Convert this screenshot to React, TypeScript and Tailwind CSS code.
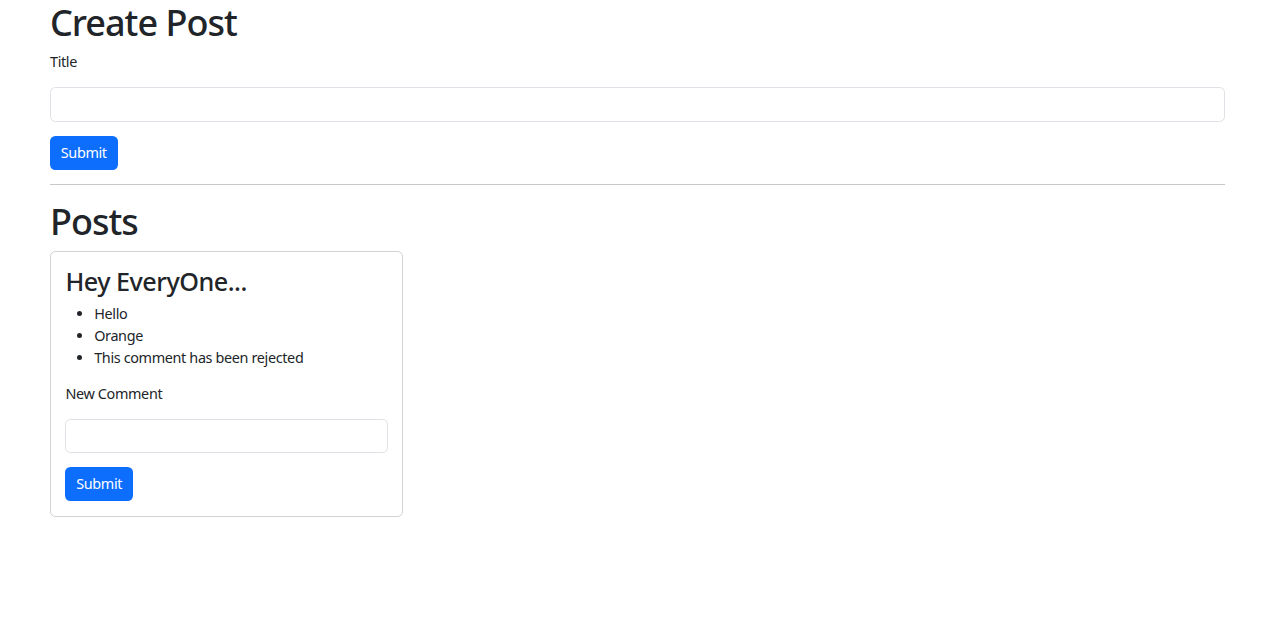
export default function App() {
  const comments = ['Hello', 'Orange', 'This comment has been rejected'];

  return (
    <div className="min-h-screen bg-white text-[#212529] font-['Segoe_UI','Noto_Sans',sans-serif] text-[14.4px] leading-[1.5] tracking-[-0.35px]">
      <div className="ml-[50px] w-[1175px] pt-[1px]">
        {/* Create post form */}
        <h1 className="text-[36px] font-medium leading-[1.2] mb-[7.2px] tracking-[-1px]">Create Post</h1>
        <form onSubmit={(e) => e.preventDefault()}>
          <div className="mb-[14.4px]">
            <label className="block mb-[14.4px]">Title</label>
            <input
              type="text"
              className="block w-full h-[34.2px] px-[10.8px] border border-[#dee2e6] rounded-[5.4px] outline-none"
            />
          </div>
          <button
            type="submit"
            className="h-[34.2px] px-[10.8px] bg-[#0d6efd] text-white rounded-[5.4px]"
          >
            Submit
          </button>
        </form>

        <hr className="mt-[14px] mb-[15px] border-t border-[#212529]/25" />

        {/* Posts */}
        <h1 className="text-[36px] font-medium leading-[1.2] mb-[7.2px] tracking-[-1px]">Posts</h1>
        <div className="flex flex-wrap">
          <div className="w-[353px] border border-black/[0.175] rounded-[5.4px] p-[14.4px]">
            <h3 className="text-[25.2px] font-medium leading-[1.2] mb-[7.2px] tracking-[-0.5px]">Hey EveryOne...</h3>
            <ul className="list-disc pl-[28.8px] mb-[14.4px]">
              {comments.map((c) => (
                <li key={c}>{c}</li>
              ))}
            </ul>
            <form onSubmit={(e) => e.preventDefault()}>
              <div className="mb-[14.4px]">
                <label className="block mb-[14.4px]">New Comment</label>
                <input
                  type="text"
                  className="block w-full h-[34.2px] px-[10.8px] border border-[#dee2e6] rounded-[5.4px] outline-none"
                />
              </div>
              <button
                type="submit"
                className="h-[34.2px] px-[10.8px] bg-[#0d6efd] text-white rounded-[5.4px]"
              >
                Submit
              </button>
            </form>
          </div>
        </div>
      </div>
    </div>
  );
}
